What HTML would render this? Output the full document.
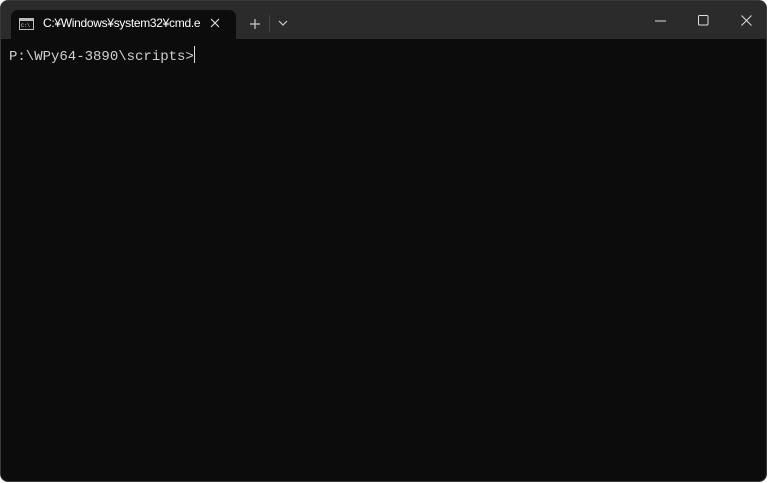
<!DOCTYPE html>
<html><head><style>
html,body{margin:0;padding:0;width:768px;height:483px;background:#fff;overflow:hidden}
.win{position:absolute;left:0;top:0;width:767px;height:482px;background:#0c0c0c;border-radius:8px;overflow:hidden;border:1px solid #3a3a3a;box-sizing:border-box}
.bar{position:absolute;left:0;top:0;width:100%;height:38px;background:#2b2b2b}
.tab{position:absolute;left:10px;top:9px;width:225px;height:29px;background:#0c0c0c;border-radius:7px 7px 0 0}
.t{position:absolute;left:42px;top:15px;color:#fff;font:12px "Liberation Sans",sans-serif;letter-spacing:-0.3px}
.prompt{position:absolute;left:8px;top:45px;color:#d0d0d0;font:14px "Liberation Mono",monospace;line-height:18px}
.cur{display:inline-block;width:1px;height:17px;background:#ddd;vertical-align:-3px}
svg{position:absolute}
</style></head><body>
<div class="win">
<div class="bar"></div>
<div class="tab"></div>
<svg style="left:18px;top:17px" width="15" height="12"><rect x="0.5" y="0.5" width="14" height="11" fill="#111" stroke="#bbb"/><rect x="1" y="1" width="13" height="2" fill="#bbb"/><text x="2" y="9" font-size="5" fill="#ddd" font-family="Liberation Mono">C:\</text></svg>
<div class="t">C:¥Windows¥system32¥cmd.e</div>
<svg style="left:209px;top:17px" width="10" height="10"><path d="M1 1L9 9M9 1L1 9" stroke="#ddd" stroke-width="1.2"/></svg>
<svg style="left:248px;top:17px" width="12" height="12"><path d="M6 1V11M1 6H11" stroke="#ccc" stroke-width="1.2"/></svg>
<div style="position:absolute;left:268px;top:14px;width:1px;height:17px;background:#444"></div>
<svg style="left:277px;top:19px" width="10" height="6"><path d="M1 1L5 5L9 1" stroke="#ccc" stroke-width="1.2" fill="none"/></svg>
<svg style="left:654px;top:19px" width="11" height="2"><path d="M0 1H11" stroke="#ddd" stroke-width="1"/></svg>
<svg style="left:697px;top:14px" width="11" height="11"><rect x="0.5" y="0.5" width="9.5" height="9.5" rx="1" stroke="#ddd" fill="none"/></svg>
<svg style="left:740px;top:14px" width="11" height="11"><path d="M0.5 0.5L10.5 10.5M10.5 0.5L0.5 10.5" stroke="#ddd" stroke-width="1"/></svg>
<div class="prompt">P:\WPy64-3890\scripts&gt;<span class="cur"></span></div>
</div>
</body></html>
